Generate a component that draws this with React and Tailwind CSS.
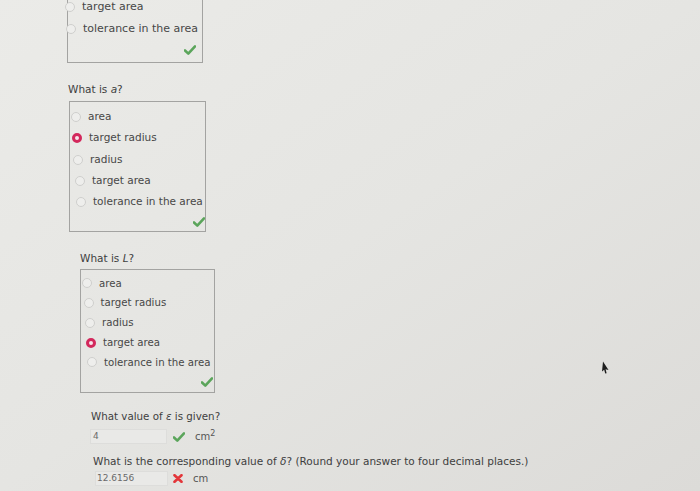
import React from 'react';

const options = ['area', 'target radius', 'radius', 'target area', 'tolerance in the area'];

function Radio({ selected, offset }) {
  if (selected) {
    return (
      <span
        className="inline-block w-[10px] h-[10px] rounded-full border-[3px] border-[#d3285c] bg-[#f7e4ea] shrink-0"
        style={{ marginLeft: offset }}
      />
    );
  }
  return (
    <span
      className="inline-block w-[10px] h-[10px] rounded-full border border-[#cfcfcd] bg-[#eeeeec] shrink-0"
      style={{ marginLeft: offset }}
    />
  );
}

function Check() {
  return (
    <svg width="12" height="10" viewBox="0 0 12 10">
      <path d="M1 5.5 L4.3 8.6 L11 1.4" fill="none" stroke="#5ba55b" strokeWidth="2.6" strokeLinecap="round" strokeLinejoin="round" />
    </svg>
  );
}

function Cross() {
  return (
    <svg width="10" height="9" viewBox="0 0 10 9">
      <path d="M1.5 1.2 L8.5 7.8 M8.5 1.2 L1.5 7.8" fill="none" stroke="#e3363a" strokeWidth="2.6" strokeLinecap="round" />
    </svg>
  );
}

function ChoiceBox({ items, selected, offsets, rowH, boxClass, checkRowClass, textClass }) {
  return (
    <div className={`border border-[#a3a3a1] flex flex-col ${boxClass}`}>
      {items.map((o, i) => (
        <div key={o} className="flex items-center whitespace-nowrap" style={{ height: rowH }}>
          <Radio selected={selected === i} offset={offsets[i]} />
          <span className={`text-[#474747] ${textClass}`}>{o}</span>
        </div>
      ))}
      <div className={`flex items-center justify-end ${checkRowClass}`}>
        <Check />
      </div>
    </div>
  );
}

export default function App() {
  return (
    <div
      className="relative w-[700px] h-[491px] overflow-hidden bg-gradient-to-br from-[#ebebe8] via-[#e5e5e2] to-[#dcdbd8]"
      style={{ fontFamily: '"DejaVu Sans", Verdana, sans-serif' }}
    >
      <div className="flex flex-col items-start">
        {/* previous question, its top is scrolled out of view */}
        <ChoiceBox
          items={options.slice(3)}
          selected={-1}
          offsets={[-3, -2]}
          rowH="22px"
          boxClass="-mt-[9px] ml-[67px] w-[136px] pt-[4px] pb-[3px]"
          checkRowClass="h-[19.4px] pr-[6px]"
          textClass="text-[11px] ml-[7px]"
        />

        <div className="mt-[19px] ml-[68px] text-[10.5px] leading-[14px] text-[#3e3e3e]">
          What is <i>a</i>?
        </div>
        <ChoiceBox
          items={options}
          selected={1}
          offsets={[1, 2, 3, 5, 6]}
          rowH="21.3px"
          boxClass="mt-[5px] ml-[69px] w-[137px] pt-[4px]"
          checkRowClass="h-[18.5px] pr-[0px]"
          textClass="text-[10.5px] ml-[7px]"
        />

        <div className="mt-[19px] ml-[80px] text-[10.5px] leading-[14px] text-[#3e3e3e]">
          What is <i>L</i>?
        </div>
        <ChoiceBox
          items={options}
          selected={3}
          offsets={[1, 2.5, 4, 5, 6]}
          rowH="19.8px"
          boxClass="mt-[4px] ml-[80px] w-[135px] pt-[3px]"
          checkRowClass="h-[20px] pr-[1px]"
          textClass="text-[10.2px] ml-[7px]"
        />

        <div className="mt-[16px] ml-[91px] text-[10.3px] leading-[14px] text-[#3e3e3e] whitespace-nowrap">
          What value of <i>ε</i> is given?
        </div>
        <div className="mt-[6px] ml-[90px] flex items-center">
          <div className="w-[77px] h-[15px] bg-[#e9e9e7] border border-[#dddddb] flex items-center pl-[2px] text-[9px] text-[#6a6a6a]">
            4
          </div>
          <span className="ml-[6px] flex items-center"><Check /></span>
          <span className="ml-[10px] text-[10px] text-[#555]">
            cm<sup className="text-[8px]">2</sup>
          </span>
        </div>

        <div className="mt-[10px] ml-[93px] text-[10.5px] leading-[14px] text-[#3e3e3e] whitespace-nowrap">
          What is the corresponding value of <i>δ</i>? (Round your answer to four decimal places.)
        </div>
        <div className="mt-[3px] ml-[95px] flex items-center">
          <div className="w-[73px] h-[15px] bg-[#e9e9e7] border border-[#dddddb] flex items-center pl-[1px] text-[9px] text-[#6a6a6a]">
            12.6156
          </div>
          <span className="ml-[5px] flex items-center"><Cross /></span>
          <span className="ml-[10px] text-[10px] text-[#555]">cm</span>
        </div>
      </div>

      {/* mouse pointer */}
      <svg className="absolute left-[599px] top-[361px]" width="11" height="13" viewBox="0 0 11 13">
        <path d="M4 0.5 L9.5 9 L6.6 8.3 L7.6 12.2 L6.2 12.6 L5.2 8.7 L3 10.5 Z" fill="#1e1e1e" />
      </svg>
    </div>
  );
}
